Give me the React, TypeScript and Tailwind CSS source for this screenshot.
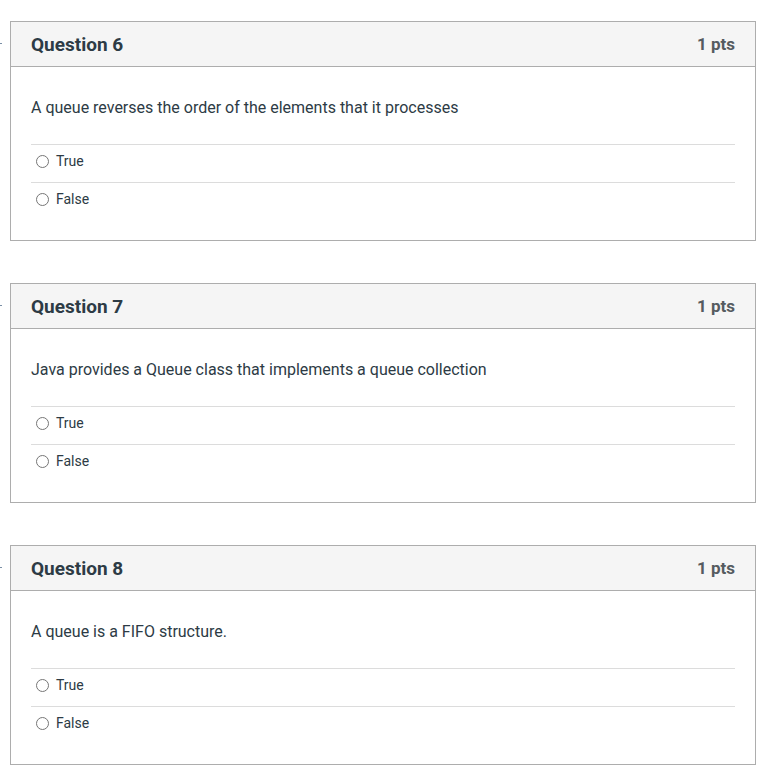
import React from 'react';

type Question = {
    number: number;
    points: number;
    prompt: string;
    options: string[];
};

const questions: Question[] = [
    { number: 6, points: 1, prompt: 'A queue reverses the order of the elements that it processes', options: ['True', 'False'] },
    { number: 7, points: 1, prompt: 'Java provides a Queue class that implements a queue collection', options: ['True', 'False'] },
    { number: 8, points: 1, prompt: 'A queue is a FIFO structure.', options: ['True', 'False'] },
];

function QuestionCard({ q }: { q: Question }) {
    return (
        <div className="flex">
            {/* little side marker */}
            <div className="w-[10px] shrink-0 pt-[22px]">
                <div className="h-[1px] w-[2px] bg-[#7a8fa6]" />
            </div>

            <div className="w-[746px] border border-[#adadad] bg-white">
                <div className="flex h-[45px] items-center justify-between border-b border-[#adadad] bg-[#f5f5f5] px-5">
                    <h3 className="text-[19px] font-bold leading-none text-[#2d3b45]">Question {q.number}</h3>
                    <span className="text-[17px] font-bold leading-none text-[#555b60]">{q.points} pts</span>
                </div>

                <div className="px-5 pt-[29px] pb-5">
                    <p className="text-[16px] leading-6 text-[#2d3b45]">{q.prompt}</p>
                    <div className="mt-[24px]">
                        {q.options.map((opt) => (
                            <label key={opt} className="flex items-center gap-[7px] border-t border-[#dcdcdc] pt-[6px] pb-[11px] pl-[5px]">
                                <span className="h-[13px] w-[13px] rounded-full border border-[#767676] bg-white" />
                                <span className="text-[14px] leading-5 text-[#2d3b45]">{opt}</span>
                            </label>
                        ))}
                    </div>
                </div>
            </div>
        </div>
    );
}

export default function App() {
    return (
        <div className="min-h-screen bg-white pt-[21px] font-['Roboto','Liberation_Sans',sans-serif]">
            <div className="flex flex-col gap-[42px]">
                {questions.map((q) => (
                    <QuestionCard key={q.number} q={q} />
                ))}
            </div>
        </div>
    );
}
